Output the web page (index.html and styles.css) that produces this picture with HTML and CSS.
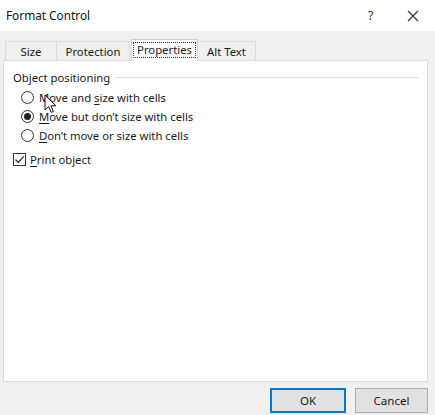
FILE: index.html
```html
<!DOCTYPE html>
<html>
<head>
<meta charset="utf-8">
<link rel="stylesheet" href="styles.css">
</head>
<body>
<div class="dialog">
  <div class="titlebar">
    <span class="title">Format Control</span>
    <span class="help">?</span>
    <span class="close"><svg width="12" height="12" viewBox="0 0 12 12"><path d="M1 1L11 11M11 1L1 11" stroke="#333" stroke-width="1.2" fill="none"/></svg></span>
  </div>
  <div class="tabs">
    <div class="tab t-size">Size</div>
    <div class="tab t-prot">Protection</div>
    <div class="tab active"><span class="focus">Properties</span></div>
    <div class="tab t-alt">Alt Text</div>
  </div>
  <div class="panel">
    <div class="group-head"><span>Object positioning</span><span class="rule"></span></div>
    <div class="radios">
      <div class="opt"><span class="radio"></span><span class="lbl">Move and <u>s</u>ize with cells</span></div>
      <div class="opt"><span class="radio checked"></span><span class="lbl"><u>M</u>ove but don’t size with cells</span></div>
      <div class="opt"><span class="radio"></span><span class="lbl"><u>D</u>on’t move or size with cells</span></div>
    </div>
    <div class="check-row"><span class="check"><svg width="11" height="11" viewBox="0 0 11 11"><path d="M1.5 5.5L4.3 8.3L9.8 2.3" stroke="#222" stroke-width="1.2" fill="none"/></svg></span><span class="lbl"><u>P</u>rint object</span></div>
    <svg class="cursor" width="14" height="20" viewBox="0 0 14 20"><path d="M1 1L1 16L4.6 12.6L7.2 18.4L9.4 17.4L6.9 11.8L11.8 11.8Z" fill="#fff" stroke="#111" stroke-width="1" stroke-linejoin="round"/></svg>
  </div>
  <div class="footer">
    <button class="btn ok">OK</button>
    <button class="btn cancel">Cancel</button>
  </div>
</div>
</body>
</html>
```
FILE: styles.css
```css
* { box-sizing: border-box; }
html, body { margin: 0; padding: 0; }
body {
  width: 435px;
  height: 415px;
  background: #f0f0f0;
  font-family: "Noto Sans", "Open Sans", "DejaVu Sans", sans-serif;
  font-size: 11.3px;
  color: #1a1a1a;
  overflow: hidden;
}
.dialog { width: 435px; height: 415px; display: flex; flex-direction: column; }
.titlebar {
  height: 31px;
  background: #ffffff;
  display: flex;
  align-items: center;
  padding-left: 6px;
}
.title { font-size: 11.8px; color: #111; flex: 1; padding-bottom: 1px; }
.help { font-size: 12.5px; color: #333; width: 12px; margin-right: 27px; }
.close { width: 12px; margin-right: 16px; display: flex; }
.tabs {
  display: flex;
  align-items: flex-end;
  height: 29px;
  padding-left: 5px;
  position: relative;
  z-index: 1;
}
.tab {
  height: 19px;
  border: 1px solid #dadada;
  border-bottom: none;
  background: #f0f0f0;
  display: flex;
  align-items: center;
  justify-content: center;
  color: #1a1a1a;
}
.t-size { width: 52px; }
.t-prot { width: 73px; border-left: none; }
.t-alt { width: 58px; border-left: none; }
.tab.active {
  height: 22px;
  width: 67px;
  background: #ffffff;
  margin-bottom: -1px;
  margin-left: 1px;
  padding-bottom: 2px;
  border-color: #d0d0d0;
}
.focus {
  border: 1px dotted #333;
  padding: 0 3px;
  line-height: 14px;
}
.panel {
  margin: 0 7px 0 3px;
  height: 322px;
  background: #ffffff;
  border: 1px solid #dadada;
  padding: 8px 9px 0 9px;
  position: relative;
}
.group-head {
  display: flex;
  align-items: center;
  gap: 5px;
  height: 16px;
}
.rule { flex: 1; height: 1px; background: #dcdcdc; }
.radios {
  display: flex;
  flex-direction: column;
  gap: 3px;
  padding: 4px 0 0 8px;
}
.opt, .check-row {
  display: flex;
  align-items: center;
  height: 16px;
}
.radio {
  width: 13px;
  height: 13px;
  border: 1px solid #333;
  border-radius: 50%;
  background: #fff;
  margin-right: 5px;
  display: flex;
  align-items: center;
  justify-content: center;
}
.radio.checked::after {
  content: "";
  width: 7px;
  height: 7px;
  border-radius: 50%;
  background: #222;
}
.check-row { margin-top: 8px; }
.check {
  width: 13px;
  height: 13px;
  border: 1px solid #333;
  background: #fff;
  margin-right: 4px;
  display: flex;
  align-items: center;
  justify-content: center;
}
u { text-decoration-thickness: 1px; text-underline-offset: 2px; }
.cursor { position: absolute; left: 40px; top: 33px; }
.footer {
  display: flex;
  justify-content: flex-end;
  gap: 9px;
  padding: 6px 7px 0 0;
}
.btn {
  height: 25px;
  font-family: inherit;
  font-size: 11.5px;
  color: #1a1a1a;
  background: #e1e1e1;
  border: 1px solid #adadad;
  padding: 0;
}
.btn.ok { border: 2px solid #0078d7; width: 76px; }
.btn.cancel { width: 73px; }
```
